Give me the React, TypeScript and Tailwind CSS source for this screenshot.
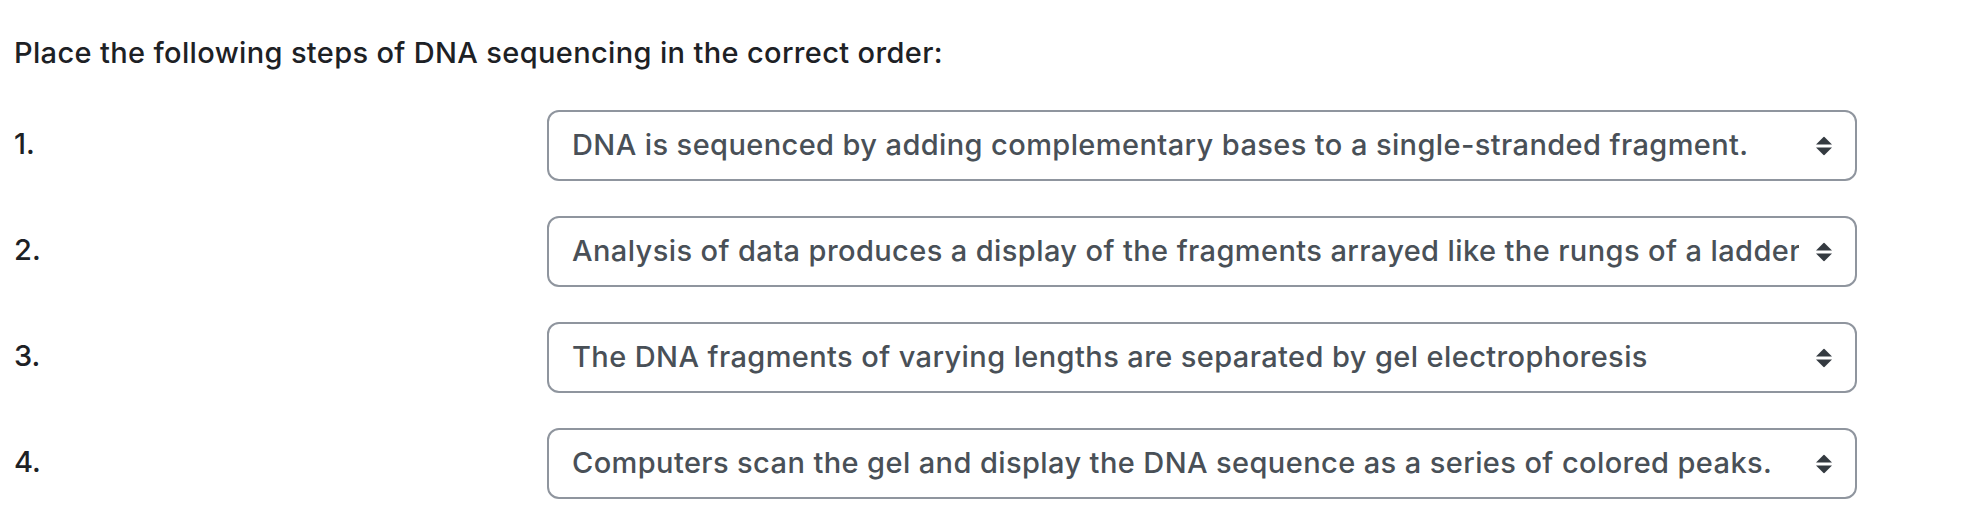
import React from "react";

const steps = [
  "DNA is sequenced by adding complementary bases to a single-stranded fragment.",
  "Analysis of data produces a display of the fragments arrayed like the rungs of a ladder",
  "The DNA fragments of varying lengths are separated by gel electrophoresis",
  "Computers scan the gel and display the DNA sequence as a series of colored peaks.",
];

function SortArrows() {
  return (
    <svg width="16" height="19" viewBox="0 0 16 19" className="pointer-events-none absolute right-[25px] top-1/2 -translate-y-1/2">
      <path d="M8 0 L16 8 L0 8 Z" fill="#343a40" />
      <path d="M0 11 L16 11 L8 19 Z" fill="#343a40" />
    </svg>
  );
}

export default function App() {
  return (
    <div
      className="min-h-screen bg-white pl-[14px] pt-[32px]"
      style={{ fontFamily: "Inter, 'Noto Sans', sans-serif" }}
    >
      <div className="text-[29px] font-medium leading-[42px] tracking-[0.35px] text-[#1d2125]">
        Place the following steps of DNA sequencing in the correct order:
      </div>
      <div className="mt-[36px] flex flex-col gap-[35px]">
        {steps.map((s, i) => (
          <div key={i} className="flex items-center">
            <div className="w-[533px] pb-[4px] text-[29px] font-medium leading-[42px] text-[#1d2125]">{i + 1}.</div>
            <div className="relative w-[1310px]">
              <select
                defaultValue={s}
                className="h-[71px] w-full appearance-none rounded-[12px] border-2 border-[#8f959e] bg-white pb-[2px] pl-[23px] pr-[56px] text-[29px] font-medium tracking-[0.4px] text-[#495057] outline-none"
                style={{ fontFamily: "Inter, 'Noto Sans', sans-serif" }}
              >
                {steps.map((o) => (
                  <option key={o} value={o}>
                    {o}
                  </option>
                ))}
              </select>
              <SortArrows />
            </div>
          </div>
        ))}
      </div>
    </div>
  );
}
